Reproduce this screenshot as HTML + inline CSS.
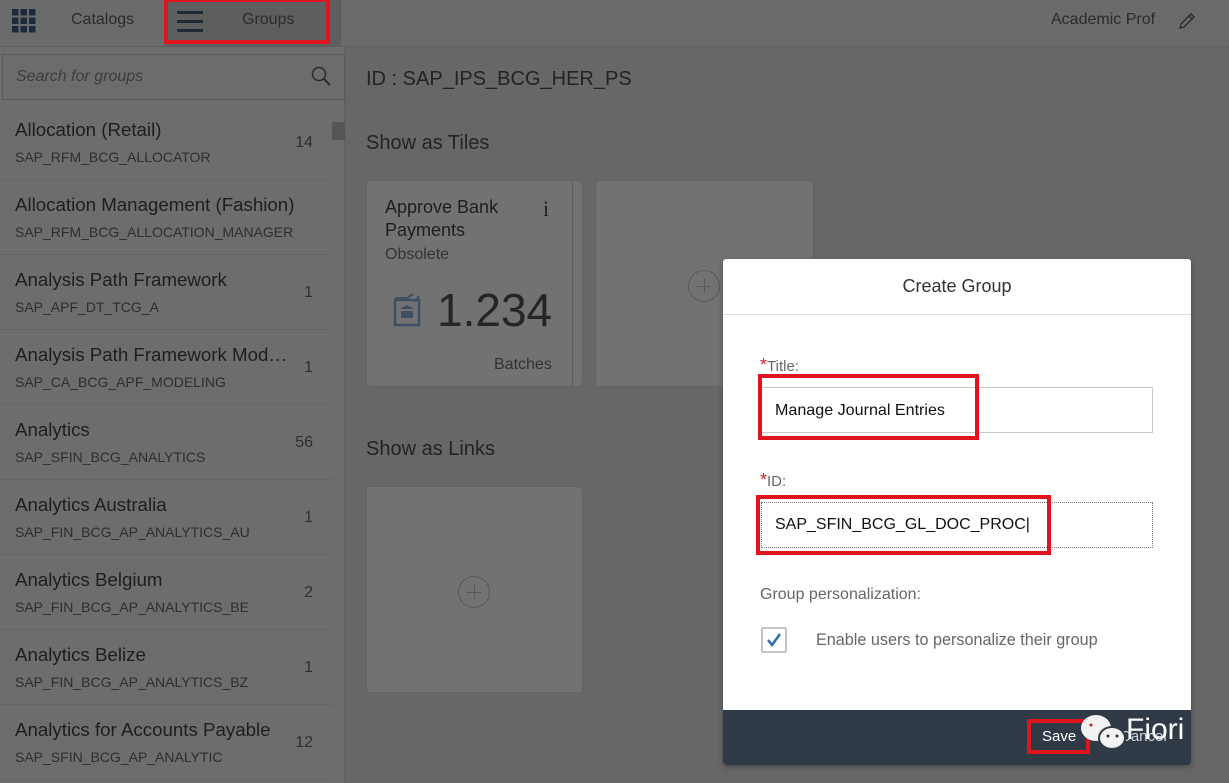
<!DOCTYPE html>
<html><head><meta charset="utf-8"><style>
*{box-sizing:border-box;margin:0;padding:0}
body{width:1229px;height:783px;overflow:hidden;background:#676767;font-family:"Liberation Sans",sans-serif;position:relative;color:#222}
.abs{position:absolute}
.hdr{left:0;top:0;width:1229px;height:47px;background:#6b6b6b;border-bottom:1px solid #616161}
.side{left:0;top:47px;width:346px;height:736px;background:#6d6d6d;border-right:2px solid #626262}
.item{position:absolute;left:0;width:332px;height:75px;border-bottom:1px solid #646464}
.item .t{position:absolute;left:15px;top:14px;font-size:18.7px;color:#1e1e1e;white-space:nowrap}
.item .s{position:absolute;left:15px;top:44px;font-size:14px;color:#2e2e2e}
.item .n{position:absolute;right:19px;top:29px;font-size:16px;color:#303030}
.tile{background:#727272;border:1px solid #636363;border-radius:4px}
.plus{width:32px;height:32px;border:1.5px solid #595959;border-radius:50%;position:absolute}
.plus:before{content:"";position:absolute;left:7px;top:14.5px;width:15px;height:1.5px;background:#595959}
.plus:after{content:"";position:absolute;left:14.5px;top:7px;width:1.5px;height:15px;background:#595959}
.red{border:4px solid #e0141e}
</style></head><body>
<div class="abs hdr"></div>
<svg class="abs" style="left:12px;top:9px" width="24" height="24"><g fill="#1d2a3a">
<rect x="0" y="0" width="6.5" height="6.5"/><rect x="8.5" y="0" width="6.5" height="6.5"/><rect x="17" y="0" width="6.5" height="6.5"/>
<rect x="0" y="8.5" width="6.5" height="6.5"/><rect x="8.5" y="8.5" width="6.5" height="6.5"/><rect x="17" y="8.5" width="6.5" height="6.5"/>
<rect x="0" y="17" width="6.5" height="6.5"/><rect x="8.5" y="17" width="6.5" height="6.5"/><rect x="17" y="17" width="6.5" height="6.5"/></g></svg>
<div class="abs" style="left:71px;top:11px;font-size:16px;color:#2b2b2b">Catalogs</div>
<div class="abs" style="left:165px;top:0;width:176px;height:47px;background:#5e5e5e"></div>
<div class="abs red" style="left:164px;top:-2px;width:166px;height:46px"></div>
<div class="abs" style="left:177px;top:11px;width:26px;height:3px;background:#1d2a3a;box-shadow:0 9px 0 #1d2a3a,0 18px 0 #1d2a3a"></div>
<div class="abs" style="left:242px;top:11px;font-size:16px;color:#2b2b2b">Groups</div>
<div class="abs" style="left:1051px;top:11px;font-size:16px;color:#2b2b2b">Academic Prof</div>
<svg class="abs" style="left:1177px;top:11px" width="20" height="20"><path d="M3 17 L4 13 L14 3 L17 6 L7 16 Z M12 5 L15 8" fill="none" stroke="#2b2b2b" stroke-width="1.4"/></svg>

<div class="abs side">
 <div class="abs" style="left:2px;top:7px;width:343px;height:46px;border:1px solid #5a5a5a;background:#6c6c6c"></div>
 <div class="abs" style="left:16px;top:21px;font-size:16px;font-style:italic;color:#3c3c3c">Search for groups</div>
 <svg class="abs" style="left:311px;top:19px" width="22" height="22"><circle cx="8" cy="8" r="6.5" fill="none" stroke="#2b2b2b" stroke-width="1.5"/><path d="M13 13 L19 19" stroke="#2b2b2b" stroke-width="2"/></svg>
 <div class="abs" style="left:332px;top:75px;width:13px;height:18px;background:#555"></div>
 <div class="item" style="top:58px"><div class="t">Allocation (Retail)</div><div class="s">SAP_RFM_BCG_ALLOCATOR</div><div class="n">14</div></div>
 <div class="item" style="top:133px"><div class="t">Allocation Management (Fashion)</div><div class="s">SAP_RFM_BCG_ALLOCATION_MANAGER</div></div>
 <div class="item" style="top:208px"><div class="t">Analysis Path Framework</div><div class="s">SAP_APF_DT_TCG_A</div><div class="n">1</div></div>
 <div class="item" style="top:283px"><div class="t">Analysis Path Framework Mod…</div><div class="s">SAP_CA_BCG_APF_MODELING</div><div class="n">1</div></div>
 <div class="item" style="top:358px"><div class="t">Analytics</div><div class="s">SAP_SFIN_BCG_ANALYTICS</div><div class="n">56</div></div>
 <div class="item" style="top:433px"><div class="t">Analytics Australia</div><div class="s">SAP_FIN_BCG_AP_ANALYTICS_AU</div><div class="n">1</div></div>
 <div class="item" style="top:508px"><div class="t">Analytics Belgium</div><div class="s">SAP_FIN_BCG_AP_ANALYTICS_BE</div><div class="n">2</div></div>
 <div class="item" style="top:583px"><div class="t">Analytics Belize</div><div class="s">SAP_FIN_BCG_AP_ANALYTICS_BZ</div><div class="n">1</div></div>
 <div class="item" style="top:658px"><div class="t">Analytics for Accounts Payable</div><div class="s">SAP_SFIN_BCG_AP_ANALYTIC</div><div class="n">12</div></div>
</div>

<div class="abs" style="left:366px;top:68px;font-size:20px;color:#232323">ID : SAP_IPS_BCG_HER_PS</div>
<div class="abs" style="left:366px;top:132px;font-size:20px;color:#232323">Show as Tiles</div>
<div class="abs tile" style="left:366px;top:180px;width:217px;height:207px"></div>
<div class="abs" style="left:572px;top:182px;width:1px;height:204px;background:#5e5e5e"></div>
<div class="abs" style="left:385px;top:196px;font-size:18px;line-height:23px;color:#1e1e1e">Approve Bank<br>Payments</div>
<div class="abs" style="left:385px;top:246px;font-size:16px;color:#333">Obsolete</div>
<div class="abs" style="left:543px;top:196px;font-size:22px;font-family:'Liberation Serif',serif;color:#222">i</div>
<svg class="abs" style="left:393px;top:292px" width="30" height="36"><path d="M2 6 L14 6 L20 2 M22 10 L26 4 M26 4" fill="none" stroke="#3f4e62" stroke-width="2"/><rect x="2" y="8" width="24" height="25" fill="none" stroke="#3f4e62" stroke-width="2.5"/><path d="M7 17 L14 13 L21 17 Z M8 19 h12 v7 h-12z" fill="#3f4e62"/></svg>
<div class="abs" style="left:437px;top:283px;font-size:46px;color:#252525">1.234</div>
<div class="abs" style="left:494px;top:356px;font-size:16px;color:#333">Batches</div>
<div class="abs tile" style="left:595px;top:180px;width:219px;height:207px"></div>
<div class="plus" style="left:688px;top:270px"></div>
<div class="abs" style="left:366px;top:438px;font-size:20px;color:#232323">Show as Links</div>
<div class="abs tile" style="left:366px;top:486px;width:217px;height:207px"></div>
<div class="plus" style="left:458px;top:576px"></div>

<div class="abs" style="left:723px;top:259px;width:468px;height:506px;background:#fff;border-radius:3px;box-shadow:0 2px 6px rgba(0,0,0,.3)"></div>
<div class="abs" style="left:723px;top:314px;width:468px;height:1px;background:#ddd"></div>
<div class="abs" style="left:723px;top:276px;width:468px;text-align:center;font-size:18px;color:#333">Create Group</div>
<div class="abs" style="left:760px;top:355px;font-size:15px;color:#666"><span style="color:#c22;font-size:18px">*</span>Title:</div>
<div class="abs" style="left:761px;top:387px;width:392px;height:46px;border:1px solid #c8c8c8"></div>
<div class="abs red" style="left:758px;top:374px;width:221px;height:66px"></div>
<div class="abs" style="left:775px;top:401px;font-size:16.1px;color:#111">Manage Journal Entries</div>
<div class="abs" style="left:760px;top:470px;font-size:15px;color:#666"><span style="color:#c22;font-size:18px">*</span>ID:</div>
<div class="abs" style="left:761px;top:502px;width:392px;height:46px;border:1px dotted #777"></div>
<div class="abs red" style="left:756px;top:495px;width:295px;height:60px"></div>
<div class="abs" style="left:775px;top:516px;font-size:16px;color:#111">SAP_SFIN_BCG_GL_DOC_PROC<span style="font-weight:100">|</span></div>
<div class="abs" style="left:760px;top:586px;font-size:16px;color:#666">Group personalization:</div>
<div class="abs" style="left:761px;top:627px;width:26px;height:26px;border:2px solid #c3c3c3;border-radius:2px"></div>
<svg class="abs" style="left:763px;top:629px" width="22" height="22"><path d="M5 11 L9 16 L17 5" fill="none" stroke="#2a6fb0" stroke-width="2.5"/></svg>
<div class="abs" style="left:816px;top:631px;font-size:16.2px;color:#666">Enable users to personalize their group</div>
<div class="abs" style="left:723px;top:710px;width:468px;height:55px;background:#2f3a46;border-radius:0 0 3px 3px"></div>
<div class="abs red" style="left:1027px;top:719px;width:63px;height:35px"></div>
<div class="abs" style="left:1042px;top:728px;font-size:15px;color:#fff">Save</div>
<div class="abs" style="left:1120px;top:728px;font-size:15px;color:#cfd6de">Cancel</div>
<svg class="abs" style="left:1076px;top:710px" width="56" height="44"><ellipse cx="20" cy="18" rx="15" ry="13" fill="#f2f2f2"/><ellipse cx="36" cy="28" rx="13" ry="11" fill="#f2f2f2" stroke="#2f3a46" stroke-width="2"/><circle cx="15" cy="15" r="1.5" fill="#b22"/><circle cx="32" cy="26" r="1.5" fill="#333"/><circle cx="41" cy="26" r="1.5" fill="#333"/></svg>
<div class="abs" style="left:1126px;top:713px;font-size:30px;color:#fff">Fiori</div>
</body></html>
